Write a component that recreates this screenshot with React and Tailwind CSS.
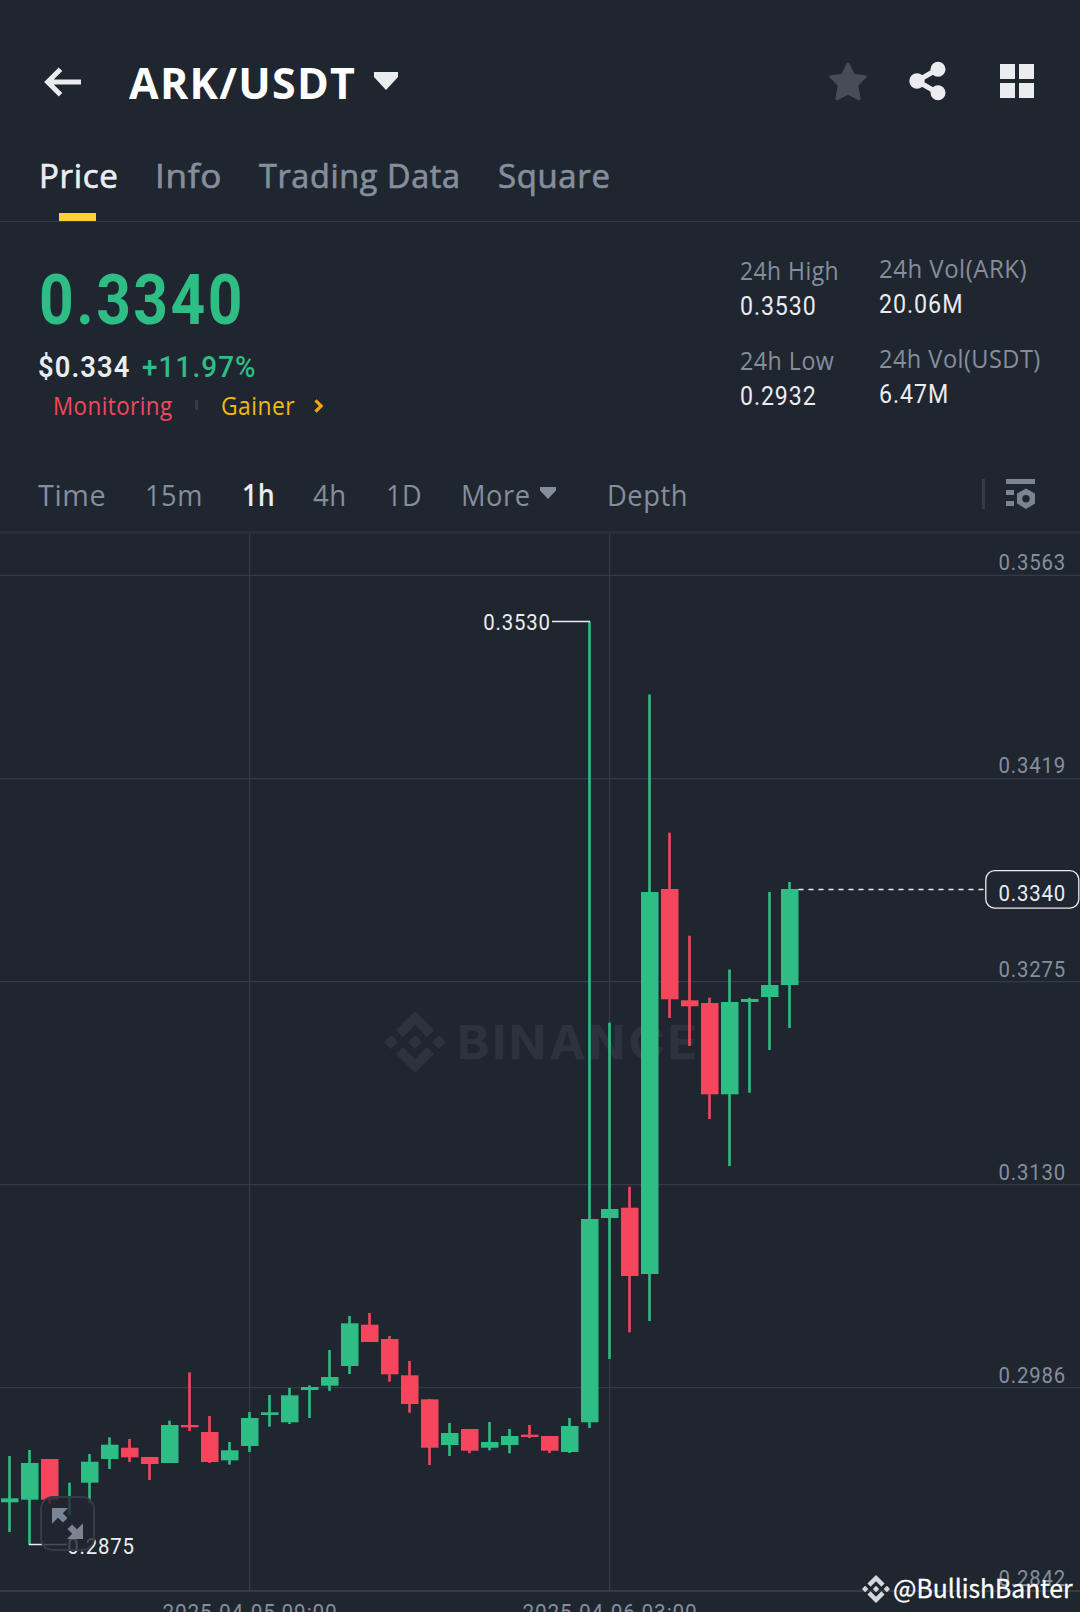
import React, { useLayoutEffect, useRef } from "react";

const SANS = "font-['Open_Sans','Noto_Sans',sans-serif]";
const DIN = "font-['Roboto','Liberation_Sans',sans-serif] tracking-[0.04em]";

// Condenses or widens one line of text to the width of its box.
function Fit({ className, children }) {
  const box = useRef(null);
  const text = useRef(null);
  useLayoutEffect(() => {
    const fit = () => {
      text.current.style.transform = `scaleX(${box.current.offsetWidth / text.current.offsetWidth})`;
    };
    fit();
    document.fonts?.ready.then(() => text.current && fit());
  }, []);
  return (
    <span ref={box} className={`block shrink-0 whitespace-nowrap ${className}`}>
      <span ref={text} className="inline-block origin-left">{children}</span>
    </span>
  );
}

const BinanceMark = ({ className }) => (
  <svg viewBox="0 0 62 62" className={className} fill="currentColor">
    <path d="M31 0 50 19 43 26 31 14 19 26 12 19Z" />
    <path d="M31 62 50 43 43 36 31 48 19 36 12 43Z" />
    <path d="M7 24 14 31 7 38 0 31ZM55 24 62 31 55 38 48 31ZM31 24 38 31 31 38 24 31Z" />
  </svg>
);

function Header() {
  return (
    <header className="flex h-[150px] shrink-0 items-center pt-[12px] pl-[44px] pr-[46px]">
      <svg className="mt-px h-[30px] w-[38px]" viewBox="0 0 38 30" fill="none" stroke="#eaecef" strokeWidth="5">
        <path d="M37 15H4M16.500 2.200 3.700 15 16.500 27.800" />
      </svg>
      <Fit className={`mt-[3px] ml-[47px] w-[227px] text-[43.500px] leading-[60px] font-bold tracking-[0.03em] text-white ${SANS}`}>ARK/USDT</Fit>
      <svg className="ml-[18px] h-[18px] w-[24px]" viewBox="0 0 24 18" fill="#eaecef">
        <path d="M0 0H24V5L12 18 0 5Z" />
      </svg>
      <div className="ml-auto flex items-center">
        <svg className="mt-px h-[39px] w-[38px]" viewBox="0 0 38 39" fill="#474d57" stroke="#474d57" strokeWidth="3" strokeLinejoin="round">
          <path d="M19 2 24.300 13.200 36 14.700 27.600 23.200 30.100 36.800 19 31.200 7.900 36.800 10.400 23.200 2 14.700 13.700 13.200Z" />
        </svg>
        <svg className="ml-[42px] h-[40px] w-[38px]" viewBox="0 0 38 40" fill="#eaecef" stroke="#eaecef">
          <path d="M29 8 8 20 29 32" fill="none" strokeWidth="5" />
          <g stroke="none">
            <circle cx="29" cy="8.300" r="7.500" />
            <circle cx="8" cy="20" r="7.700" />
            <circle cx="29" cy="31.700" r="7.500" />
          </g>
        </svg>
        <div className="ml-[53px] grid grid-cols-2 gap-[4px]">
          {[0, 1, 2, 3].map((n) => (
            <span key={n} className="size-[15px] bg-[#eaecef]" />
          ))}
        </div>
      </div>
    </header>
  );
}

function Tabs() {
  return (
    <nav className={`flex h-[72px] shrink-0 gap-[37px] border-b border-[#333b47] pt-[5px] pl-[39px] text-[33.500px] leading-[41px] font-medium tracking-[0.02em] text-[#848e9c] [-webkit-text-stroke:0.7px] ${SANS}`}>
      <div className="flex flex-col justify-between text-[#eaecef]">
        <Fit className="w-[80px]">Price</Fit>
        <span className="ml-[20px] h-[8px] w-[37px] bg-[#fcd535]" />
      </div>
      <Fit className="-ml-px w-[67px]">Info</Fit>
      <Fit className="w-[202px]">Trading Data</Fit>
      <Fit className="w-[113px]">Square</Fit>
    </nav>
  );
}

function Stat({ label, value, labelWidth, valueWidth }) {
  return (
    <div className="flex flex-col gap-[2px] text-[25px] leading-[34px]">
      <Fit className={`tracking-[0.02em] text-[#848e9c] ${SANS} ${labelWidth}`}>{label}</Fit>
      <Fit className={`text-[25.500px] text-[#eaecef] ${DIN} ${valueWidth}`}>{value}</Fit>
    </div>
  );
}

function Summary() {
  return (
    <section className="flex h-[236px] shrink-0 justify-between">
      <div className="pt-[38px]">
        <Fit className={`ml-[39px] w-[206px] text-[70px] leading-[80px] font-bold text-[#2ebd85] ${DIN}`}>0.3340</Fit>
        <div className={`mt-[9px] ml-[38px] flex text-[30px] leading-[36px] ${DIN}`}>
          <Fit className="w-[92px] font-semibold text-[#eaecef]">$0.334</Fit>
          <Fit className="ml-[12px] w-[115px] font-medium text-[#2ebd85]">+11.97%</Fit>
        </div>
        <div className={`mt-[5px] flex items-center pl-[53px] text-[25px] leading-[30px] tracking-[0.02em] ${SANS}`}>
          <Fit className="w-[120px] text-[#f6465d]">Monitoring</Fit>
          <span className="ml-[22px] h-[10px] w-[3px] bg-[#333b47]" />
          <Fit className="ml-[23px] w-[74px] text-[#f0b90b]">Gainer</Fit>
          <svg className="mt-[2px] ml-[19px] h-[14px] w-[10px]" viewBox="0 0 10 14" fill="none" stroke="#f0a60b" strokeWidth="3.200">
            <path d="M1.500 1.300 7.200 7 1.500 12.700" />
          </svg>
        </div>
      </div>
      <div className="flex pt-[29px] pr-[39px]">
        <div className="flex w-[139px] flex-col gap-[20px] pt-[2px]">
          <Stat label="24h High" value="0.3530" labelWidth="w-[99px]" valueWidth="w-[77px]" />
          <Stat label="24h Low" value="0.2932" labelWidth="w-[94px]" valueWidth="w-[77px]" />
        </div>
        <div className="flex flex-col gap-[20px]">
          <Stat label="24h Vol(ARK)" value="20.06M" labelWidth="w-[148px]" valueWidth="w-[84px]" />
          <Stat label="24h Vol(USDT)" value="6.47M" labelWidth="w-[162px]" valueWidth="w-[70px]" />
        </div>
      </div>
    </section>
  );
}

function Intervals() {
  return (
    <div className={`flex h-[73px] shrink-0 items-center pl-[38px] pr-[45px] text-[30px] leading-[40px] tracking-[0.02em] text-[#848e9c] ${SANS}`}>
      <Fit className="w-[68px]">Time</Fit>
      <Fit className="ml-[39px] w-[58px]">15m</Fit>
      <Fit className="ml-[39px] w-[33px] font-semibold text-[#eaecef]">1h</Fit>
      <Fit className="ml-[38px] w-[34px]">4h</Fit>
      <Fit className="ml-[39px] w-[36px]">1D</Fit>
      <Fit className="ml-[39px] w-[70px]">More</Fit>
      <svg className="ml-[9px] -mt-[4px] h-[12px] w-[16px]" viewBox="0 0 16 12" fill="#848e9c">
        <path d="M0 0H16V3.500L8 12 0 3.500Z" />
      </svg>
      <Fit className="ml-[51px] w-[81px]">Depth</Fit>
      <span className="-mt-[2px] ml-auto h-[30px] w-[3px] bg-[#333b47]" />
      <svg className="-mt-[2px] ml-[21px] h-[30px] w-[29px]" viewBox="0 0 29 30" fill="#7b8492">
        <path d="M0 0H29V5H0ZM0 11H8V16H0ZM0 22H8V27H0Z" />
        <path fillRule="evenodd" d="M20 9.500 29 14.500V24.500L20 30 11 24.500V14.500ZM20 16A3.700 3.700 0 1 0 20 23.400 3.700 3.700 0 1 0 20 16Z" />
      </svg>
    </div>
  );
}

const G = "#2ebd85";
const R = "#f6465d";
// colour, high, body top, body bottom, low
const CANDLES = [
  [G, 1456, 1498.3, 1502.3, 1532], [G, 1450, 1463, 1499.7, 1544.7], [R, 1459, 1459, 1499.7, 1503.7],
  [G, 1482.7, 1496, 1497, 1515], [G, 1454, 1461.7, 1482.7, 1502.7], [G, 1437.3, 1444.7, 1459, 1469],
  [R, 1439, 1447.7, 1457.3, 1462], [R, 1457, 1457, 1464, 1480], [G, 1420.7, 1425, 1463, 1463],
  [R, 1372.3, 1425, 1427.3, 1431], [R, 1416, 1432, 1462, 1463], [G, 1442, 1450.3, 1460.3, 1464.7],
  [G, 1412, 1418, 1446, 1452], [G, 1395, 1412.3, 1415, 1426.7], [G, 1388, 1395.3, 1422.3, 1424],
  [G, 1385.3, 1387, 1390, 1418], [G, 1350, 1377, 1385.7, 1391], [G, 1316, 1323.3, 1366, 1374],
  [R, 1313, 1324.7, 1342, 1342], [R, 1336, 1339, 1374.3, 1381.7], [R, 1361, 1375.3, 1404, 1412.7],
  [R, 1399.3, 1399.3, 1447.7, 1465], [G, 1423, 1433, 1445, 1456], [R, 1429, 1429, 1450.7, 1453.3],
  [G, 1422, 1442, 1447.7, 1450.3], [G, 1429, 1436, 1445, 1453.3], [R, 1425, 1434.7, 1437, 1438],
  [R, 1436, 1436, 1450.7, 1453], [G, 1418, 1426, 1452, 1453], [G, 621.5, 1219, 1422.3, 1428],
  [G, 1022.7, 1209, 1218, 1359], [R, 1186.7, 1207.7, 1276, 1332.3], [G, 694.5, 892, 1274, 1321],
  [R, 832.7, 889, 999.3, 1018], [R, 935.7, 1000.3, 1006.3, 1046], [R, 997.7, 1003, 1094.3, 1119],
  [G, 969.5, 1002, 1094.3, 1166], [G, 997.7, 999, 1002, 1092.7], [G, 892, 985, 997, 1050],
  [G, 882, 889, 985, 1028],
];

const LEVELS = [
  [575, "0.3563"], [778, "0.3419"], [981, "0.3275"], [1184, "0.3130"], [1387, "0.2986"], [1590, "0.2842"],
];

const Num = ({ x, y, w = 67.5, fill = "#848e9c", children }) => (
  <text x={x} y={y} fill={fill} textLength={w} lengthAdjust="spacingAndGlyphs">{children}</text>
);

function Chart() {
  return (
    <div className="relative h-[1081px] shrink-0">
      <svg className={`block h-[1081px] w-[1080px] text-[22.500px] ${DIN}`} viewBox="0 531 1080 1081">
        <rect y="531" width="1080" height="3" fill="#272e38" />
        <g fill="#333b46">
          {LEVELS.map(([y]) => (
            <rect key={y} y={y === 575 ? 574.7 : y} width="1080" height={y === 1590 ? 2 : 1.3} />
          ))}
          <rect x="249" y="534" width="1.300" height="1057" />
          <rect x="609" y="534" width="1.300" height="1057" />
        </g>
        <g transform="translate(384 1011)" fill="#2d333e">
          <path d="M31 0 50 19 43 26 31 14 19 26 12 19ZM31 62 50 43 43 36 31 48 19 36 12 43Z" />
          <path d="M7 24 14 31 7 38 0 31ZM55 24 62 31 55 38 48 31ZM31 24 38 31 31 38 24 31Z" />
        </g>
        <text x="457" y="1059" textLength="243" lengthAdjust="spacingAndGlyphs" fill="#2d333e" className="font-['Inter',sans-serif] text-[47px] font-bold tracking-[0.06em]">BINANCE</text>
        {CANDLES.map(([c, high, top, bottom, low], i) => (
          <g key={i} fill={c}>
            <rect x={8.2 + i * 20} y={high} width="2.600" height={low - high} />
            <rect x={1 + i * 20} y={top} width="17.500" height={bottom - top} />
          </g>
        ))}
        {LEVELS.map(([y, label], i) => (
          <Num key={label} x={998.5} y={y - 4.5 + (i < 2 ? -0.5 : 0)}>{label}</Num>
        ))}
        <path d="M552 621.500H590M29 1544.500H67" stroke="#eaecef" strokeWidth="1.300" />
        <Num x={483.200} y={629.700} fill="#eaecef">0.3530</Num>
        <Num x={67.200} y={1554} fill="#eaecef">0.2875</Num>
        <path d="M798.500 889.500H984" stroke="#eaecef" strokeWidth="1.300" strokeDasharray="5 5" />
        <rect x="985.800" y="870.600" width="93" height="37.600" rx="9" fill="#202630" stroke="#eaecef" strokeWidth="1.300" />
        <Num x={998.500} y={900.700} fill="#eaecef">0.3340</Num>
        <Num x={162.500} y={1619.500} w={175}>2025-04-05 09:00</Num>
        <Num x={522.500} y={1619.500} w={175}>2025-04-06 03:00</Num>
      </svg>
      <button className="absolute top-[965px] left-[40px] flex size-[55px] items-center justify-center rounded-[13px] border-2 border-[#333b47] bg-[#202630]/80">
        <svg className="size-[31px]" viewBox="0 0 31 31" fill="#7b8492">
          <path d="M0 0H16L10.800 5.300 15.500 10 11 14.500 6 9.700 0 15.700Z" />
          <path d="M31 31H15L20.200 25.700 15.500 21 20 16.500 25 21.300 31 15.300Z" />
        </svg>
      </button>
      <div className="absolute top-[1037px] left-[862px] flex items-center gap-[3px] text-white">
        <BinanceMark className="mt-[2px] size-[28px] text-[#d5d7da]" />
        <Fit className="w-[180px] font-['Noto_Sans_CJK_SC','Noto_Sans',sans-serif] text-[25px] leading-[40px] font-normal [-webkit-text-stroke:0.3px] -mt-px">@BullishBanter</Fit>
      </div>
    </div>
  );
}

export default function App() {
  return (
    <main className="flex h-[1612px] w-[1080px] flex-col overflow-hidden bg-[#202630]">
      <Header />
      <Tabs />
      <Summary />
      <Intervals />
      <Chart />
    </main>
  );
}
